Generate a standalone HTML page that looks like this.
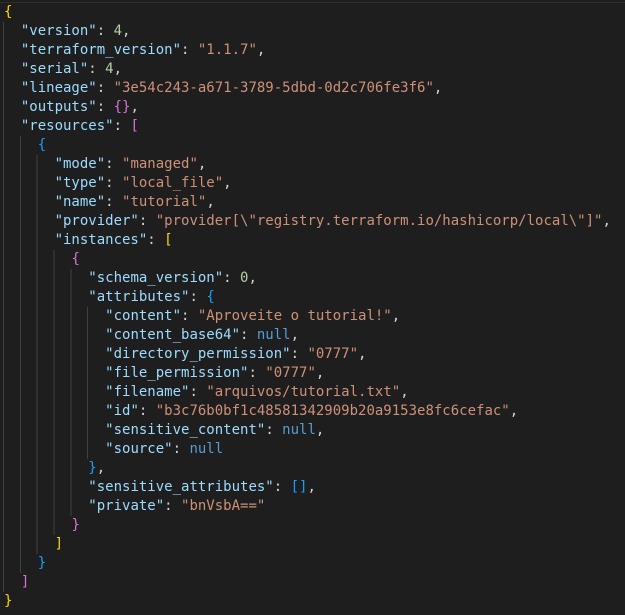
<!DOCTYPE html>
<html><head><meta charset="utf-8"><style>
html,body{margin:0;padding:0;background:#1e1e1e;width:625px;height:615px;overflow:hidden}
.ed{position:relative;padding-top:3px;font-family:"DejaVu Sans Mono","Liberation Mono",monospace;font-size:14px;line-height:19px;color:#d4d4d4}
.top{position:absolute;left:0;top:2px;width:625px;height:1px;background:#2e2e2e}
.l{position:relative;height:19px;padding-left:4px;white-space:pre}
.g{position:absolute;left:3px;top:0;height:19px;background:repeating-linear-gradient(to right,#404040 0 1px,transparent 1px 16.84px)}
.k{color:#9cdcfe}.s{color:#ce9178}.n{color:#b5cea8}.c{color:#569cd6}
.b0{color:#ffd700}.b1{color:#da70d6}.b2{color:#179fff}
</style></head><body><div class="ed"><div class="top"></div>
<div class="l"><span class="b0">{</span></div>
<div class="l"><span class="g" style="width:2px"></span>  <span class="k">"version"</span>: <span class="n">4</span>,</div>
<div class="l"><span class="g" style="width:2px"></span>  <span class="k">"terraform_version"</span>: <span class="s">"1.1.7"</span>,</div>
<div class="l"><span class="g" style="width:2px"></span>  <span class="k">"serial"</span>: <span class="n">4</span>,</div>
<div class="l"><span class="g" style="width:2px"></span>  <span class="k">"lineage"</span>: <span class="s">"3e54c243-a671-3789-5dbd-0d2c706fe3f6"</span>,</div>
<div class="l"><span class="g" style="width:2px"></span>  <span class="k">"outputs"</span>: <span class="b1">{}</span>,</div>
<div class="l"><span class="g" style="width:2px"></span>  <span class="k">"resources"</span>: <span class="b1">[</span></div>
<div class="l"><span class="g" style="width:18px"></span>    <span class="b2">{</span></div>
<div class="l"><span class="g" style="width:35px"></span>      <span class="k">"mode"</span>: <span class="s">"managed"</span>,</div>
<div class="l"><span class="g" style="width:35px"></span>      <span class="k">"type"</span>: <span class="s">"local_file"</span>,</div>
<div class="l"><span class="g" style="width:35px"></span>      <span class="k">"name"</span>: <span class="s">"tutorial"</span>,</div>
<div class="l"><span class="g" style="width:35px"></span>      <span class="k">"provider"</span>: <span class="s">"provider[\"registry.terraform.io/hashicorp/local\"]"</span>,</div>
<div class="l"><span class="g" style="width:35px"></span>      <span class="k">"instances"</span>: <span class="b0">[</span></div>
<div class="l"><span class="g" style="width:52px"></span>        <span class="b1">{</span></div>
<div class="l"><span class="g" style="width:69px"></span>          <span class="k">"schema_version"</span>: <span class="n">0</span>,</div>
<div class="l"><span class="g" style="width:69px"></span>          <span class="k">"attributes"</span>: <span class="b2">{</span></div>
<div class="l"><span class="g" style="width:86px"></span>            <span class="k">"content"</span>: <span class="s">"Aproveite o tutorial!"</span>,</div>
<div class="l"><span class="g" style="width:86px"></span>            <span class="k">"content_base64"</span>: <span class="c">null</span>,</div>
<div class="l"><span class="g" style="width:86px"></span>            <span class="k">"directory_permission"</span>: <span class="s">"0777"</span>,</div>
<div class="l"><span class="g" style="width:86px"></span>            <span class="k">"file_permission"</span>: <span class="s">"0777"</span>,</div>
<div class="l"><span class="g" style="width:86px"></span>            <span class="k">"filename"</span>: <span class="s">"arquivos/tutorial.txt"</span>,</div>
<div class="l"><span class="g" style="width:86px"></span>            <span class="k">"id"</span>: <span class="s">"b3c76b0bf1c48581342909b20a9153e8fc6cefac"</span>,</div>
<div class="l"><span class="g" style="width:86px"></span>            <span class="k">"sensitive_content"</span>: <span class="c">null</span>,</div>
<div class="l"><span class="g" style="width:86px"></span>            <span class="k">"source"</span>: <span class="c">null</span></div>
<div class="l"><span class="g" style="width:69px"></span>          <span class="b2">}</span>,</div>
<div class="l"><span class="g" style="width:69px"></span>          <span class="k">"sensitive_attributes"</span>: <span class="b2">[]</span>,</div>
<div class="l"><span class="g" style="width:69px"></span>          <span class="k">"private"</span>: <span class="s">"bnVsbA=="</span></div>
<div class="l"><span class="g" style="width:52px"></span>        <span class="b1">}</span></div>
<div class="l"><span class="g" style="width:35px"></span>      <span class="b0">]</span></div>
<div class="l"><span class="g" style="width:18px"></span>    <span class="b2">}</span></div>
<div class="l"><span class="g" style="width:2px"></span>  <span class="b1">]</span></div>
<div class="l"><span class="b0">}</span></div>
</div></body></html>
